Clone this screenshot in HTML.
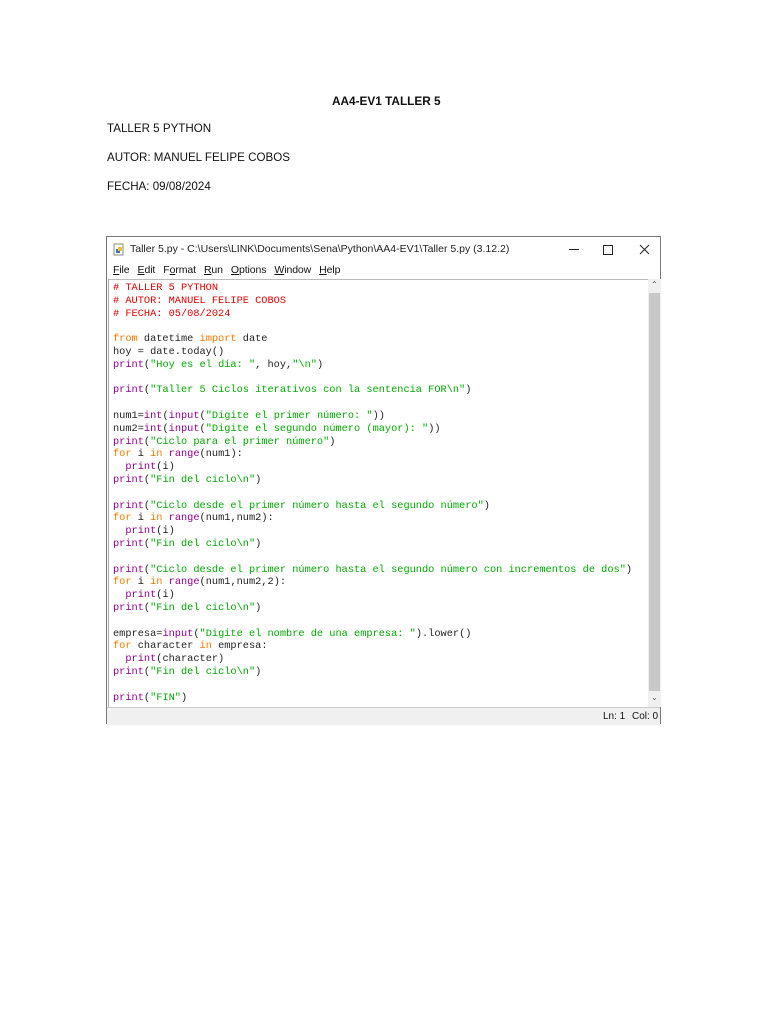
<!DOCTYPE html>
<html><head><meta charset="utf-8"><style>
body{margin:0;width:768px;height:1024px;background:#fff;position:relative;font-family:"Liberation Sans",sans-serif;overflow:hidden}
.t{position:absolute;font-size:11.6px;color:#111;white-space:nowrap}
.win{position:absolute;left:106px;top:236px;width:555px;height:488px;border:1px solid #777;box-sizing:border-box;background:#fff}
.title{position:absolute;left:0;top:0;width:100%;height:26px;font-size:10.5px;color:#222}
.menu{position:absolute;left:6px;top:27px;font-size:10.5px;color:#111;letter-spacing:-0.1px}
.menu span{margin-right:8px}
.code{position:absolute;left:1px;top:42px;width:540px;height:428px;border-top:1px solid #bbb;border-left:1px solid #aaa}
pre{margin:0;position:absolute;left:4px;top:2px;font-family:"Liberation Mono",monospace;font-size:10.3px;line-height:12.8px;color:#222}
.c{color:#e00000}.k{color:#ff7700}.b{color:#900090}.s{color:#00aa00}
.sb{position:absolute;left:541px;top:42px;width:13px;height:428px;background:#f0f0f0}
.thumb{position:absolute;left:1px;top:14px;width:11px;height:398px;background:#c8c8c8}
.status{position:absolute;left:0;top:470px;width:100%;height:17px;background:#f0f0f0;border-top:1px solid #ccc;font-size:10px;color:#111}
</style></head><body>
<div class="t" style="left:332px;top:94px;font-weight:bold;font-size:11.8px">AA4-EV1 TALLER 5</div>
<div class="t" style="left:107px;top:122px">TALLER 5 PYTHON</div>
<div class="t" style="left:107px;top:151px">AUTOR: MANUEL FELIPE COBOS</div>
<div class="t" style="left:107px;top:180px">FECHA: 09/08/2024</div>
<div class="win">
<div class="title">
<svg style="position:absolute;left:6px;top:6px" width="12" height="13"><rect x="1" y="1" width="9" height="11" fill="#fff" stroke="#888"/><path d="M3 6h4v4H3z" fill="#3a77b5"/><path d="M5 4h4v4H5z" fill="#f2c530"/></svg>
<span style="position:absolute;left:23px;top:6px">Taller 5.py - C:\Users\LINK\Documents\Sena\Python\AA4-EV1\Taller 5.py (3.12.2)</span>
<span style="position:absolute;left:462px;top:12px;width:10px;height:1px;background:#222"></span>
<span style="position:absolute;left:496px;top:8px;width:8px;height:8px;border:1px solid #222"></span>
<svg style="position:absolute;left:532px;top:7px" width="11" height="11"><path d="M1 1L10 10M10 1L1 10" stroke="#222" stroke-width="1"/></svg>
</div>
<div class="menu"><span><u>F</u>ile</span><span><u>E</u>dit</span><span>F<u>o</u>rmat</span><span><u>R</u>un</span><span><u>O</u>ptions</span><span><u>W</u>indow</span><span><u>H</u>elp</span></div>
<div class="code"><pre><span class="c"># TALLER 5 PYTHON
# AUTOR: MANUEL FELIPE COBOS
# FECHA: 05/08/2024</span>

<span class="k">from</span> datetime <span class="k">import</span> date
hoy = date.today()
<span class="b">print</span>(<span class="s">"Hoy es el día: "</span>, hoy,<span class="s">"\n"</span>)

<span class="b">print</span>(<span class="s">"Taller 5 Ciclos iterativos con la sentencia FOR\n"</span>)

num1=<span class="b">int</span>(<span class="b">input</span>(<span class="s">"Digite el primer número: "</span>))
num2=<span class="b">int</span>(<span class="b">input</span>(<span class="s">"Digite el segundo número (mayor): "</span>))
<span class="b">print</span>(<span class="s">"Ciclo para el primer número"</span>)
<span class="k">for</span> i <span class="k">in</span> <span class="b">range</span>(num1):
  <span class="b">print</span>(i)
<span class="b">print</span>(<span class="s">"Fin del ciclo\n"</span>)

<span class="b">print</span>(<span class="s">"Ciclo desde el primer número hasta el segundo número"</span>)
<span class="k">for</span> i <span class="k">in</span> <span class="b">range</span>(num1,num2):
  <span class="b">print</span>(i)
<span class="b">print</span>(<span class="s">"Fin del ciclo\n"</span>)

<span class="b">print</span>(<span class="s">"Ciclo desde el primer número hasta el segundo número con incrementos de dos"</span>)
<span class="k">for</span> i <span class="k">in</span> <span class="b">range</span>(num1,num2,2):
  <span class="b">print</span>(i)
<span class="b">print</span>(<span class="s">"Fin del ciclo\n"</span>)

empresa=<span class="b">input</span>(<span class="s">"Digite el nombre de una empresa: "</span>).lower()
<span class="k">for</span> character <span class="k">in</span> empresa:
  <span class="b">print</span>(character)
<span class="b">print</span>(<span class="s">"Fin del ciclo\n"</span>)

<span class="b">print</span>(<span class="s">"FIN"</span>)</pre></div>
<div class="sb"><div class="thumb"></div>
<span style="position:absolute;left:3px;top:1px;font-size:8px;color:#555">&#8963;</span>
<span style="position:absolute;left:3px;top:414px;font-size:8px;color:#555">&#8964;</span></div>
<div class="status"><span style="position:absolute;left:496px;top:3px">Ln: 1</span><span style="position:absolute;left:525px;top:3px">Col: 0</span></div>
</div>
</body></html>
